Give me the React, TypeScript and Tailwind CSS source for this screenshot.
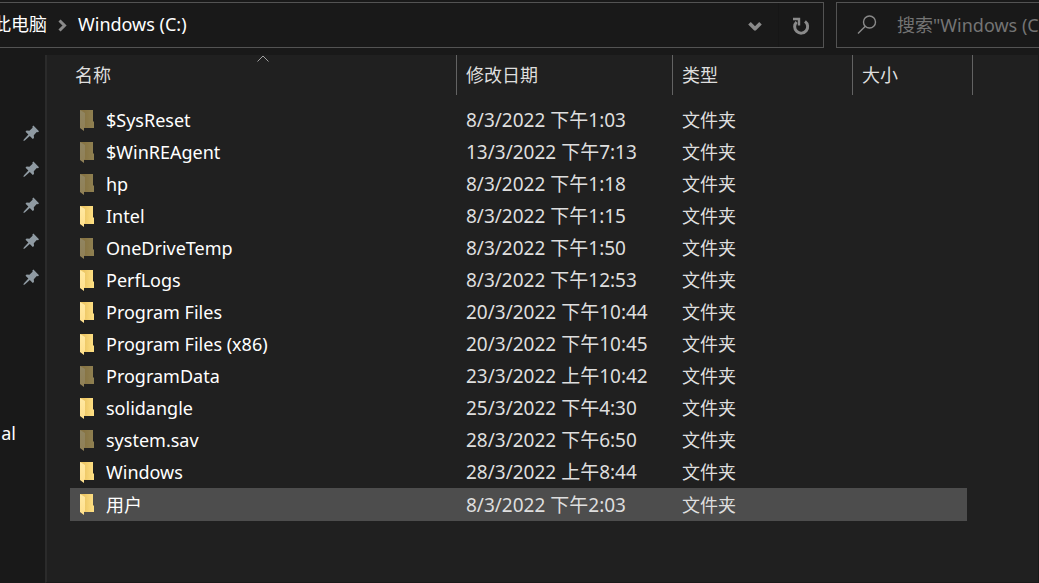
import { ChevronDown } from "lucide-react";

type Entry = { name: string; date: string; hidden?: boolean; selected?: boolean };

const entries: Entry[] = [
  { name: "$SysReset", date: "8/3/2022 下午1:03", hidden: true },
  { name: "$WinREAgent", date: "13/3/2022 下午7:13", hidden: true },
  { name: "hp", date: "8/3/2022 下午1:18", hidden: true },
  { name: "Intel", date: "8/3/2022 下午1:15" },
  { name: "OneDriveTemp", date: "8/3/2022 下午1:50", hidden: true },
  { name: "PerfLogs", date: "8/3/2022 下午12:53" },
  { name: "Program Files", date: "20/3/2022 下午10:44" },
  { name: "Program Files (x86)", date: "20/3/2022 下午10:45" },
  { name: "ProgramData", date: "23/3/2022 上午10:42", hidden: true },
  { name: "solidangle", date: "25/3/2022 下午4:30" },
  { name: "system.sav", date: "28/3/2022 下午6:50", hidden: true },
  { name: "Windows", date: "28/3/2022 上午8:44" },
  { name: "用户", date: "8/3/2022 下午2:03", selected: true },
];

const pins = [1, 2, 3, 4, 5];

function FolderIcon({ dim }: { dim?: boolean }) {
  return (
    <svg
      width="14"
      height="21"
      viewBox="0 0 14 21"
      className={dim ? "shrink-0 opacity-50" : "shrink-0"}
      aria-hidden="true"
    >
      <defs>
        <linearGradient id="folder-back" x1="0" y1="0" x2="1" y2="0">
          <stop offset="0.3" stopColor="#edc766" />
          <stop offset="1" stopColor="#ffe185" />
        </linearGradient>
        <linearGradient id="folder-flap" x1="0" y1="0" x2="0" y2="1">
          <stop offset="0" stopColor="#ffe9a3" />
          <stop offset="1" stopColor="#ffdf8c" />
        </linearGradient>
      </defs>
      <path d="M0 0H13V11L14 12V18H0Z" fill="url(#folder-back)" />
      <path d="M0 0L5 3V17L4 18V21L0 18Z" fill="url(#folder-flap)" />
    </svg>
  );
}

function PinIcon() {
  return (
    <svg width="17" height="17" viewBox="0 0 17 17" aria-hidden="true">
      <path
        d="M10.4 0.6L16 6.2L15 7.2L13.8 7L10.8 10.2L11 13L9.8 14L6.8 11L1.8 15.6L0.4 15.9L0.8 14.5L5.4 9.6L2.5 6.8L3.6 5.6L6.4 5.8L9.6 2.8L9.4 1.6Z"
        fill="#8f9aa2"
      />
    </svg>
  );
}

function AddressBar() {
  return (
    <div className="flex h-[55px] items-start gap-3 bg-[#191919] pt-[2px]">
      <nav className="flex h-[46px] min-w-0 flex-1 items-center border-y border-r border-[#535353]">
        <div className="flex w-[47px] justify-end overflow-hidden pb-[2px] whitespace-nowrap">
          <a href="#pc">此电脑</a>
        </div>
        <svg
          width="9"
          height="13"
          viewBox="0 0 9 13"
          fill="none"
          stroke="#8a8a8a"
          strokeWidth="3"
          className="mx-[11px] shrink-0"
          aria-hidden="true"
        >
          <path d="M1.5 1.5L6.5 6.5L1.5 11.5" />
        </svg>
        <a href="#c" className="flex-1 pb-[2px] whitespace-nowrap">
          Windows (C:)
        </a>
        <button type="button" aria-label="历史记录" className="flex h-full w-[46px] items-center justify-center pt-px">
          <ChevronDown className="size-[22px] text-[#8a8a8a]" strokeWidth={4} strokeLinecap="butt" />
        </button>
        <button
          type="button"
          aria-label="刷新"
          className="flex h-full w-[45px] items-center justify-center border-l border-[#161616] pt-[2px]"
        >
          <svg width="18" height="18" viewBox="0 0 18 18" fill="none" stroke="#8a8a8a" aria-hidden="true">
            <path d="M4.6 5A6.5 6.5 0 1 0 13 4.4" strokeWidth="3" />
            <path d="M1 2H7V8.5" strokeWidth="2.4" />
          </svg>
        </button>
      </nav>
      <label className="flex h-[46px] w-[203px] items-center overflow-hidden border-y border-l border-[#535353] pl-5">
        <svg width="20" height="20" viewBox="0 0 20 20" fill="none" stroke="#8a8a8a" className="shrink-0" aria-hidden="true">
          <circle cx="12.5" cy="7" r="6" strokeWidth="1.4" />
          <path d="M8.3 11.3L1 18.6" strokeWidth="1.4" />
        </svg>
        <input
          type="text"
          aria-label="搜索"
          placeholder={'搜索"Windows (C:)"'}
          className="ml-5 w-0 flex-1 bg-transparent outline-none placeholder:text-[#747474]"
        />
      </label>
    </div>
  );
}

function Sidebar() {
  return (
    <aside className="w-[45px] shrink-0 overflow-hidden bg-[#191919] pt-[60px]">
      <ul>
        {pins.map((pin) => (
          <li key={pin} className="flex h-9 items-center justify-end pr-[5px]">
            <PinIcon />
          </li>
        ))}
      </ul>
      <div className="mt-[120px] flex h-9 w-4 items-center justify-end">al</div>
    </aside>
  );
}

function FileTable() {
  return (
    <table className="ml-[23px] w-[903px] table-fixed border-separate border-spacing-0 text-left whitespace-nowrap">
      <colgroup>
        <col className="w-[387px]" />
        <col className="w-[216px]" />
        <col className="w-[180px]" />
        <col className="w-[114px]" />
        <col className="w-[6px]" />
      </colgroup>
      <thead className="text-[#dedede]">
        <tr className="h-10">
          <th className="relative border-r border-[#636363] pl-[5px] font-normal">
            名称
            <svg
              width="12"
              height="7"
              viewBox="0 0 12 7"
              fill="none"
              stroke="#a0a0a0"
              className="absolute top-0 left-1/2 -translate-x-1/2"
              aria-hidden="true"
            >
              <path d="M0.5 6.5L6 1L11.5 6.5" />
            </svg>
          </th>
          <th className="border-r border-[#636363] pl-[9px] font-normal">修改日期</th>
          <th className="border-r border-[#636363] pl-[9px] font-normal">类型</th>
          <th colSpan={2} className="border-r border-[#636363] pl-[9px] font-normal">
            大小
          </th>
        </tr>
      </thead>
      <tbody className="text-[#dedede] before:block before:h-[9px]">
        {entries.map((entry) => {
          const cell = entry.selected ? "bg-[#4d4d4d]" : "";
          return (
            <tr key={entry.name} className={entry.selected ? "h-[33px]" : "h-8"}>
              <td className={`pl-[10px] ${cell}`}>
                <div className="flex items-center gap-3 text-white">
                  <FolderIcon dim={entry.hidden} />
                  {entry.name}
                </div>
              </td>
              <td className={`pl-[9px] text-[19px] leading-6 ${cell}`}>{entry.date}</td>
              <td className={`pl-[9px] ${cell}`}>文件夹</td>
              <td className={cell}></td>
            </tr>
          );
        })}
      </tbody>
    </table>
  );
}

export default function App() {
  return (
    <div className="flex h-screen flex-col overflow-hidden bg-[#202020] font-['Noto_Sans','Noto_Sans_CJK_SC',sans-serif] text-[18px] leading-6 text-white">
      <AddressBar />
      <div className="flex min-h-0 flex-1">
        <Sidebar />
        <main className="min-w-0 flex-1 overflow-hidden border-r border-b border-l-2 border-[#191919] border-l-[#2b2b2b]">
          <FileTable />
        </main>
      </div>
    </div>
  );
}
